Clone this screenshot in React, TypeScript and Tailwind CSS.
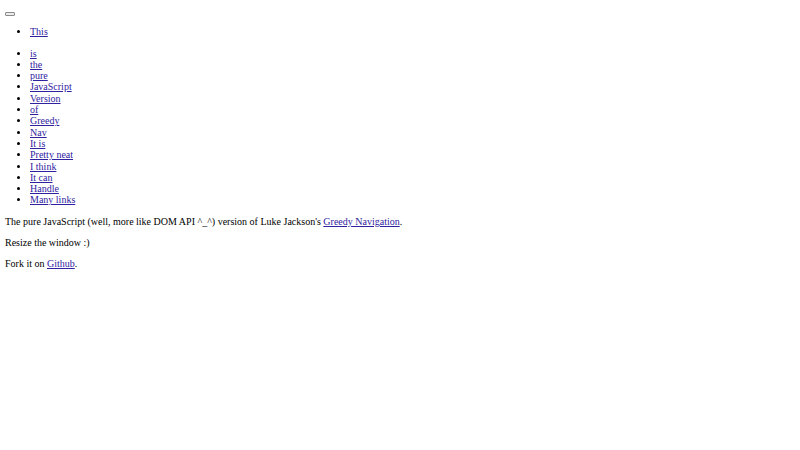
const links = [
  "is",
  "the",
  "pure",
  "JavaScript",
  "Version",
  "of",
  "Greedy",
  "Nav",
  "It is",
  "Pretty neat",
  "I think",
  "It can",
  "Handle",
  "Many links",
];

function Link({ children }: { children: React.ReactNode }) {
  return (
    <a href="#" className="text-[#2f22a0] underline">
      {children}
    </a>
  );
}

export default function App() {
  return (
    <div className="m-[5px] font-['Liberation_Serif',serif] text-[10px] leading-[11.3px] text-black">
      <nav>
        <button className="inline-block h-[4px] w-[10px] rounded-[1px] border border-[#8a8a8a] bg-[#ececec] align-[-1px]" />
        <ul className="my-[10px] list-disc pl-[25px]">
          <li>
            <Link>This</Link>
          </li>
        </ul>
        <ul className="mt-[9px] mb-[10px] list-disc pl-[25px]">
          {links.map((l) => (
            <li key={l}>
              <Link>{l}</Link>
            </li>
          ))}
        </ul>
      </nav>
      <p className="my-[10px]">
        The pure JavaScript (well, more like DOM API ^_^) version of Luke Jackson's{" "}
        <Link>Greedy Navigation</Link>.
      </p>
      <p className="my-[10px]">Resize the window :)</p>
      <p className="my-[10px]">
        Fork it on <Link>Github</Link>.
      </p>
    </div>
  );
}
